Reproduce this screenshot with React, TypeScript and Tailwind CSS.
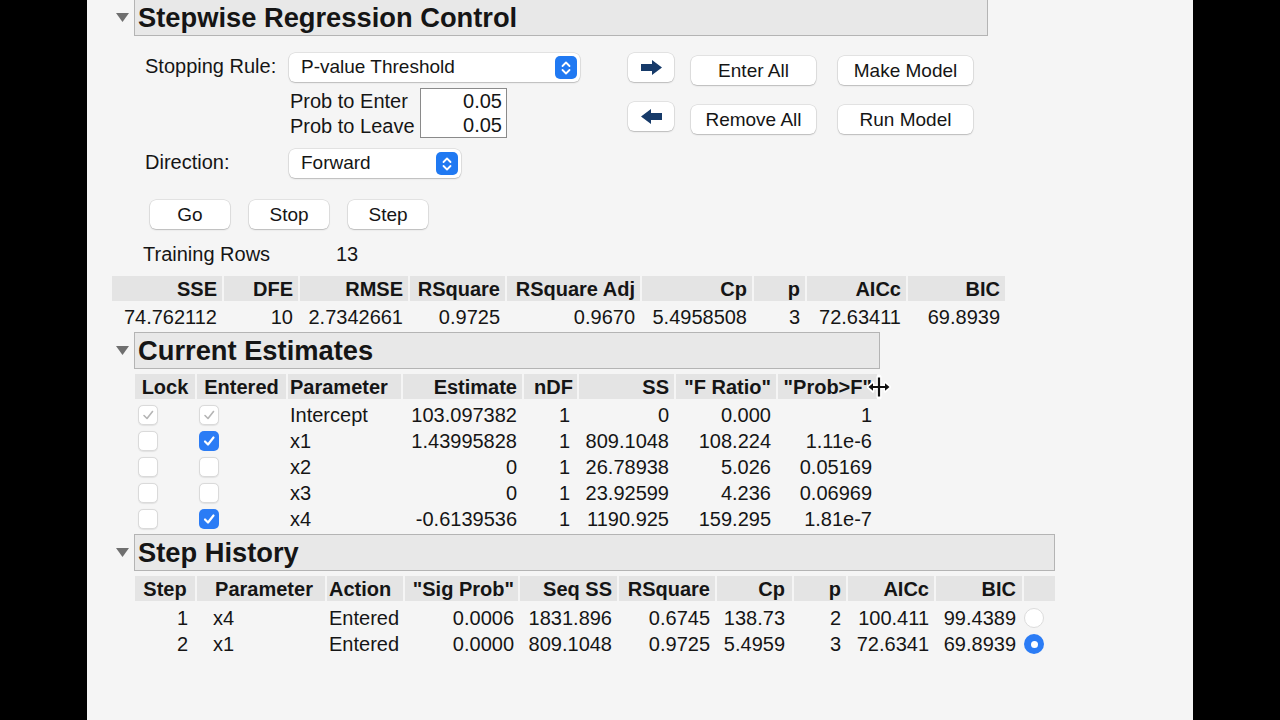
import React from 'react';

const btnShadow = 'shadow-[0_0_0_0.5px_rgba(0,0,0,0.14),0_1px_1.5px_rgba(0,0,0,0.18)]';

function Triangle() {
    return (
        <svg width="13" height="9" viewBox="0 0 13 9">
            <polygon points="0,0 13,0 6.5,9" fill="#6f6f6f" />
        </svg>
    );
}

function SectionHeader({ title, boxClass }: { title: string; boxClass: string }) {
    return (
        <div className="flex items-center">
            <div className="w-[47px] shrink-0 flex justify-end pr-[5px]">
                <Triangle />
            </div>
            <div className={`${boxClass} border border-[#b4b4b4] bg-[#e8e8e8] flex items-center pl-[3px]`}>
                <span className="text-[27.3px] font-bold leading-none">{title}</span>
            </div>
        </div>
    );
}

function Stepper() {
    return (
        <span className="w-[22px] h-[23px] rounded-[5px] bg-[#2079f2] flex items-center justify-center">
            <svg width="12" height="16" viewBox="0 0 12 16">
                <path d="M2.5 6 L6 2.5 L9.5 6 M2.5 10 L6 13.5 L9.5 10" stroke="white" strokeWidth="1.8" fill="none" strokeLinecap="round" strokeLinejoin="round" />
            </svg>
        </span>
    );
}

function Select({ value, widthClass }: { value: string; widthClass: string }) {
    return (
        <div className={`${widthClass} h-[29px] bg-white rounded-[6px] ${btnShadow} flex items-center justify-between pl-[12px] pr-[3px]`}>
            <span className="text-[19px] leading-none -mt-[2px]">{value}</span>
            <Stepper />
        </div>
    );
}

function Button({ label, widthClass }: { label: string; widthClass: string }) {
    return (
        <div className={`${widthClass} h-[29px] bg-white rounded-[6px] ${btnShadow} flex items-center justify-center text-[19px] leading-none`}>
            {label}
        </div>
    );
}

function ArrowButton({ dir }: { dir: 'right' | 'left' }) {
    return (
        <div className={`w-[46px] h-[29px] bg-white rounded-[6px] ${btnShadow} flex items-center justify-center`}>
            <svg width="21" height="15" viewBox="0 0 21 15">
                {dir === 'right' ? (
                    <path d="M0 4 H11 V0 L21 7.5 L11 15 V11 H0 Z" fill="#163a69" />
                ) : (
                    <path d="M21 4 H10 V0 L0 7.5 L10 15 V11 H21 Z" fill="#163a69" />
                )}
            </svg>
        </div>
    );
}

function Check({ state }: { state: 'off' | 'on' | 'locked' }) {
    if (state === 'on') {
        return (
            <span className="w-[20px] h-[20px] rounded-[5px] bg-[#2b7cf5] flex items-center justify-center">
                <svg width="14" height="14" viewBox="0 0 14 14">
                    <path d="M3 7.5 L6 10.5 L11.5 3.5" stroke="white" strokeWidth="2.2" fill="none" strokeLinecap="round" strokeLinejoin="round" />
                </svg>
            </span>
        );
    }
    return (
        <span className="w-[20px] h-[20px] rounded-[5px] bg-white border border-[#dadada] shadow-[0_0.5px_1px_rgba(0,0,0,0.08)] flex items-center justify-center">
            {state === 'locked' && (
                <svg width="14" height="14" viewBox="0 0 14 14">
                    <path d="M3 7.5 L6 10.5 L11.5 3.5" stroke="#b5b5b5" strokeWidth="1.6" fill="none" strokeLinecap="round" strokeLinejoin="round" />
                </svg>
            )}
        </span>
    );
}

function Radio({ on }: { on: boolean }) {
    if (on) {
        return (
            <span className="w-[20px] h-[20px] rounded-full bg-[#2b7cf5] flex items-center justify-center">
                <span className="w-[7px] h-[7px] rounded-full bg-white" />
            </span>
        );
    }
    return <span className="w-[20px] h-[20px] rounded-full bg-white border border-[#dcdcdc]" />;
}

function ResizeCursor() {
    return (
        <svg width="24" height="26" viewBox="0 0 24 26">
            <g stroke="white" strokeWidth="5" strokeLinecap="round" fill="white">
                <path d="M12 3 V23" />
                <path d="M3 13 H21" />
            </g>
            <path d="M1 13 L6 8.5 V17.5 Z M23 13 L18 8.5 V17.5 Z" fill="white" stroke="white" strokeWidth="2.5" strokeLinejoin="round" />
            <path d="M12 3.5 V22.5" stroke="#111" strokeWidth="2.2" />
            <path d="M5 13 H19" stroke="#111" strokeWidth="2" />
            <path d="M1.5 13 L6 9.2 V16.8 Z M22.5 13 L18 9.2 V16.8 Z" fill="#111" />
        </svg>
    );
}

const summaryCols = 'grid-cols-[110px_74px_108px_95px_133px_110px_51px_99px_97px]';
const summaryHead = ['SSE', 'DFE', 'RMSE', 'RSquare', 'RSquare Adj', 'Cp', 'p', 'AICc', 'BIC'];
const summaryData = ['74.762112', '10', '2.7342661', '0.9725', '0.9670', '5.4958508', '3', '72.63411', '69.8939'];

const estCols = 'grid-cols-[60px_89px_113px_119px_53px_95px_100px_99px]';
const estimates: { lock: 'off' | 'on' | 'locked'; entered: 'off' | 'on' | 'locked'; vals: string[] }[] = [
    { lock: 'locked', entered: 'locked', vals: ['Intercept', '103.097382', '1', '0', '0.000', '1'] },
    { lock: 'off', entered: 'on', vals: ['x1', '1.43995828', '1', '809.1048', '108.224', '1.11e-6'] },
    { lock: 'off', entered: 'off', vals: ['x2', '0', '1', '26.78938', '5.026', '0.05169'] },
    { lock: 'off', entered: 'off', vals: ['x3', '0', '1', '23.92599', '4.236', '0.06969'] },
    { lock: 'off', entered: 'on', vals: ['x4', '-0.6139536', '1', '1190.925', '159.295', '1.81e-7'] },
];

const stepCols = 'grid-cols-[60px_128px_76px_113px_97px_96px_75px_52px_86px_86px_31px]';
const steps = [
    { vals: ['1', 'x4', 'Entered', '0.0006', '1831.896', '0.6745', '138.73', '2', '100.411', '99.4389'], on: false },
    { vals: ['2', 'x1', 'Entered', '0.0000', '809.1048', '0.9725', '5.4959', '3', '72.6341', '69.8939'], on: true },
];

const headCell = 'h-[25px] bg-[#e4e4e4] flex items-center text-[20px] font-bold leading-none';

export default function App() {
    return (
        <div className="flex h-[720px] w-[1280px] overflow-hidden bg-black font-['Liberation_Sans',Arial,sans-serif] text-[#151515]">
            <div className="w-[87px] shrink-0 bg-black" />
            <main className="w-[1106px] shrink-0 bg-[#f5f5f5] h-full">
                <div className="-mt-px">
                    <SectionHeader title="Stepwise Regression Control" boxClass="w-[854px] h-[37px]" />
                </div>

                <div className="flex mt-[17px]">
                    <div className="w-[541px] shrink-0 pl-[58px] text-[20px] leading-none">
                        <div className="flex items-center h-[29px]">
                            <span className="w-[144px] -mt-[3px]">Stopping Rule:</span>
                            <Select value="P-value Threshold" widthClass="w-[291px]" />
                        </div>
                        <div className="ml-[145px] mt-[6px]">
                            <div className="flex items-center h-[25px]">
                                <span className="w-[130px] mt-[1px]">Prob to Enter</span>
                                <span className="w-[87px] h-[26px] border border-[#8a8a8a] bg-white flex items-center justify-end pr-[4px]">0.05</span>
                            </div>
                            <div className="flex items-center h-[25px]">
                                <span className="w-[130px]">Prob to Leave</span>
                                <span className="w-[87px] h-[25px] border border-t-0 border-[#8a8a8a] bg-white flex items-center justify-end pr-[4px]">0.05</span>
                            </div>
                        </div>
                        <div className="flex items-center h-[29px] mt-[11px]">
                            <span className="w-[144px] -mt-[3px]">Direction:</span>
                            <Select value="Forward" widthClass="w-[172px]" />
                        </div>
                        <div className="flex gap-[19px] mt-[22px] ml-[5px]">
                            <Button label="Go" widthClass="w-[80px]" />
                            <Button label="Stop" widthClass="w-[80px]" />
                            <Button label="Step" widthClass="w-[80px]" />
                        </div>
                        <div className="flex items-center h-[24px] mt-[13px] -ml-[2px]">
                            <span className="w-[193px]">Training Rows</span>
                            <span>13</span>
                        </div>
                    </div>

                    <div className="flex flex-col">
                        <div className="flex items-start">
                            <ArrowButton dir="right" />
                            <div className="ml-[17px] mt-[3px]"><Button label="Enter All" widthClass="w-[125px]" /></div>
                            <div className="ml-[22px] mt-[3px]"><Button label="Make Model" widthClass="w-[135px]" /></div>
                        </div>
                        <div className="flex items-start mt-[17px]">
                            <ArrowButton dir="left" />
                            <div className="ml-[17px] mt-[3px]"><Button label="Remove All" widthClass="w-[125px]" /></div>
                            <div className="ml-[22px] mt-[3px]"><Button label="Run Model" widthClass="w-[135px]" /></div>
                        </div>
                    </div>
                </div>

                {/* summary of the current fit */}
                <div className={`grid ${summaryCols} gap-x-[2px] ml-[25px] mt-[10px]`}>
                    {summaryHead.map((h) => (
                        <div key={h} className={`${headCell} justify-end pr-[5px]`}>{h}</div>
                    ))}
                    {summaryData.map((d, i) => (
                        <div key={i} className="h-[30px] flex items-center justify-end pr-[5px] pt-[2px] text-[20px] leading-none">{d}</div>
                    ))}
                </div>

                <div className="mt-[1px]">
                    <SectionHeader title="Current Estimates" boxClass="w-[746px] h-[37px]" />
                </div>

                <div className="relative ml-[48px] mt-[5px]">
                    <div className={`grid ${estCols} gap-x-[2px]`}>
                        <div className={`${headCell} justify-center`}>Lock</div>
                        <div className={`${headCell} justify-center`}>Entered</div>
                        <div className={`${headCell} pl-[2px]`}>Parameter</div>
                        <div className={`${headCell} justify-end pr-[5px]`}>Estimate</div>
                        <div className={`${headCell} justify-end pr-[4px]`}>nDF</div>
                        <div className={`${headCell} justify-end pr-[5px]`}>SS</div>
                        <div className={`${headCell} justify-end pr-[5px]`}>"F Ratio"</div>
                        <div className={`${headCell} justify-end pr-[5px]`}>"Prob&gt;F"</div>
                    </div>
                    <div className="mt-[3px]">
                        {estimates.map((r) => (
                            <div key={r.vals[0]} className={`grid ${estCols} gap-x-[2px] h-[26px] text-[20px] leading-none`}>
                                <div className="flex items-center pl-[3px]"><Check state={r.lock} /></div>
                                <div className="flex items-center pl-[2px]"><Check state={r.entered} /></div>
                                <div className="flex items-center pl-[2px]">{r.vals[0]}</div>
                                <div className="flex items-center justify-end pr-[5px]">{r.vals[1]}</div>
                                <div className="flex items-center justify-end pr-[7px]">{r.vals[2]}</div>
                                <div className="flex items-center justify-end pr-[5px]">{r.vals[3]}</div>
                                <div className="flex items-center justify-end pr-[5px]">{r.vals[4]}</div>
                                <div className="flex items-center justify-end pr-[5px]">{r.vals[5]}</div>
                            </div>
                        ))}
                    </div>
                    <div className="absolute left-[732px] top-0">
                        <ResizeCursor />
                    </div>
                </div>

                <div className="mt-[2px]">
                    <SectionHeader title="Step History" boxClass="w-[921px] h-[37px]" />
                </div>

                <div className="ml-[48px] mt-[5px]">
                    <div className={`grid ${stepCols} gap-x-[2px]`}>
                        <div className={`${headCell} justify-center`}>Step</div>
                        <div className={`${headCell} justify-center pl-[6px]`}>Parameter</div>
                        <div className={`${headCell} pl-[2px]`}>Action</div>
                        <div className={`${headCell} justify-end pr-[4px]`}>"Sig Prob"</div>
                        <div className={`${headCell} justify-end pr-[5px]`}>Seq SS</div>
                        <div className={`${headCell} justify-end pr-[5px]`}>RSquare</div>
                        <div className={`${headCell} justify-end pr-[7px]`}>Cp</div>
                        <div className={`${headCell} justify-end pr-[5px]`}>p</div>
                        <div className={`${headCell} justify-end pr-[5px]`}>AICc</div>
                        <div className={`${headCell} justify-end pr-[6px]`}>BIC</div>
                        <div className={headCell} />
                    </div>
                    <div className="mt-[4px]">
                        {steps.map((s) => (
                            <div key={s.vals[0]} className={`grid ${stepCols} gap-x-[2px] h-[26px] text-[20px] leading-none`}>
                                <div className="flex items-center justify-end pr-[7px]">{s.vals[0]}</div>
                                <div className="flex items-center pl-[16px]">{s.vals[1]}</div>
                                <div className="flex items-center pl-[2px]">{s.vals[2]}</div>
                                <div className="flex items-center justify-end pr-[4px]">{s.vals[3]}</div>
                                <div className="flex items-center justify-end pr-[5px]">{s.vals[4]}</div>
                                <div className="flex items-center justify-end pr-[5px]">{s.vals[5]}</div>
                                <div className="flex items-center justify-end pr-[7px]">{s.vals[6]}</div>
                                <div className="flex items-center justify-end pr-[5px]">{s.vals[7]}</div>
                                <div className="flex items-center justify-end pr-[5px]">{s.vals[8]}</div>
                                <div className="flex items-center justify-end pr-[6px]">{s.vals[9]}</div>
                                <div className="flex items-center"><Radio on={s.on} /></div>
                            </div>
                        ))}
                    </div>
                </div>
            </main>
            <div className="flex-1 bg-black" />
        </div>
    );
}
